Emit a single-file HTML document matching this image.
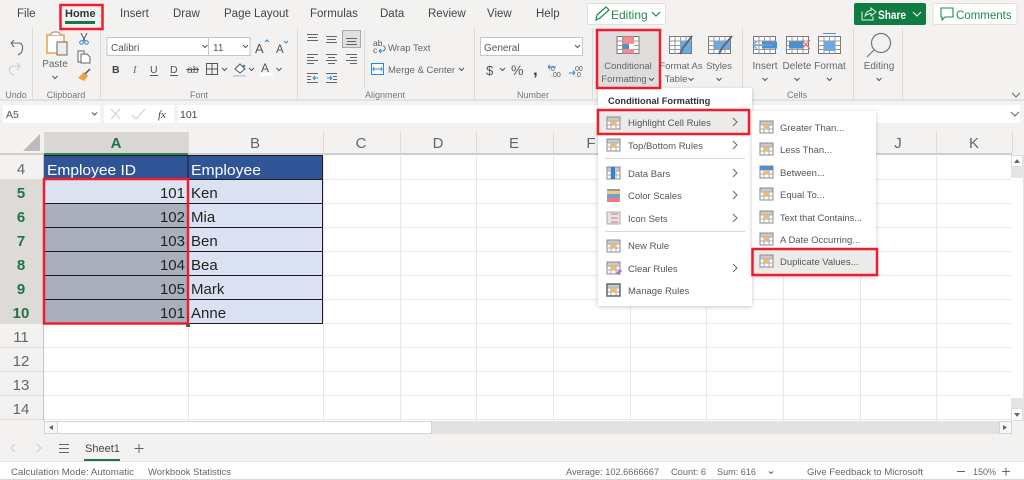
<!DOCTYPE html>
<html><head><meta charset="utf-8"><style>
html,body{margin:0;padding:0;width:1024px;height:480px;overflow:hidden;background:#fff}
svg{display:block;filter:blur(.35px)}
text{font-family:"Liberation Sans",sans-serif;font-size:10px;fill:#555}
.tab{font-size:11.5px;fill:#444}
.g{font-size:9px;fill:#777;text-anchor:middle}
.r{font-size:10px;fill:#666;text-anchor:middle}
.m{font-size:9.500px;fill:#555}
.h{font-size:15px;fill:#666;text-anchor:middle}
.rn{font-size:15px;fill:#666;text-anchor:middle}
.rs{font-size:15px;fill:#217346;font-weight:bold;text-anchor:middle}
.c{font-size:15px;fill:#222}
.n{font-size:15px;fill:#222;text-anchor:end}
.w{font-size:15px;fill:#fff}
.s{font-size:9.500px;fill:#666}
</style></head><body>
<svg width="1024" height="480" viewBox="0 0 1024 480" xmlns="http://www.w3.org/2000/svg">
<defs>
<filter id="sh" x="-10%" y="-10%" width="120%" height="120%"><feDropShadow dx="0" dy="1" stdDeviation="2" flood-color="#000" flood-opacity=".22"/></filter>
<g id="ic"><rect x="0" y="0" width="13" height="12" fill="#fff" stroke="#888"/><path d="M0 4H13M0 8H13M4 0V12M9 0V12" stroke="#aaa" fill="none"/><rect x="4" y="4" width="5" height="4" fill="#f2b968"/><rect x="0.5" y="0.5" width="12" height="3" fill="#c9c9c9"/></g>
<path id="ar" d="M0 0L4 4L0 8" fill="none" stroke="#666" stroke-width="1"/>
<path id="dn" d="M0 0L2.500 2.500L5 0" fill="none" stroke="#555" stroke-width="1"/>
<g id="sheet"><rect x="0" y="0" width="22" height="17" fill="#fff" stroke="#777"/><path d="M0 4.500H22M0 9H22M0 13H22M5.500 0V17M11 0V17M16.500 0V17" stroke="#999" fill="none"/></g>
</defs>

<rect width="1024" height="480" fill="#fff"/>
<!-- ribbon -->
<rect width="1024" height="100" fill="#f3f2f1"/>
<rect y="99" width="1024" height="2" fill="#e3e2e0"/>
<text class="tab" x="17" y="17">File</text>
<text class="tab" x="65" y="17" style="font-weight:bold;fill:#333;font-size:11px">Home</text>
<rect x="65" y="21" width="30" height="3" fill="#107c41"/>
<text class="tab" x="120" y="17">Insert</text>
<text class="tab" x="173" y="17">Draw</text>
<text class="tab" x="224" y="17">Page Layout</text>
<text class="tab" x="310" y="17">Formulas</text>
<text class="tab" x="380" y="17">Data</text>
<text class="tab" x="428" y="17">Review</text>
<text class="tab" x="487" y="17">View</text>
<text class="tab" x="536" y="17">Help</text>

<!-- Editing -->
<rect x="587.500" y="3.500" width="78" height="21" rx="2" fill="#fff" stroke="#e1dfdd"/>
<path d="M596 20L597 15L606 7L609 10L600 18Z" fill="none" stroke="#218a53" stroke-width="1.200"/>
<text x="611" y="19" style="font-size:12px;fill:#218a53">Editing</text>
<path d="M652 12L656 16L660 12" fill="none" stroke="#218a53" stroke-width="1.200"/>
<!-- Share -->
<rect x="854" y="3" width="72" height="22" rx="2" fill="#107c41"/>
<path d="M862 11.500V20H873V16.500M865 16C866 12 868 10.500 871 10.500V8L876 12L871 16V13.500C869 13.500 867 14.500 865 16Z" fill="none" stroke="#e8f3ec" stroke-width="1"/>
<text x="878" y="19" style="font-size:11.500px;fill:#fff;font-weight:bold" textLength="28" lengthAdjust="spacingAndGlyphs">Share</text>
<path d="M913 12L917 16L921 12" fill="none" stroke="#fff"/>
<!-- Comments -->
<rect x="933" y="3.500" width="84" height="21" rx="2" fill="#fff" stroke="#e1dfdd"/>
<path d="M941 8H953V17H945L942 20V17H941Z" fill="none" stroke="#218a53" stroke-width="1.100"/>
<text x="956" y="19" style="font-size:11.500px;fill:#218a53">Comments</text>

<!-- separators -->
<g stroke="#dcdad8"><path d="M32.500 28V99M100.500 28V99M297.500 28V99M364.500 30V88M474.500 28V99M592.500 28V99M742.500 28V99M853.500 28V99M902.500 28V99"/></g>

<!-- Undo -->
<path d="M11 43H19C24 43 24 53 18 55M11 43L14 40M11 43L14 47" fill="none" stroke="#666" stroke-width="1.100"/>
<path d="M20 66H13C8 66 8 74 14 75M20 66L17 63M20 66L17 70" fill="none" stroke="#ccc" stroke-width="1.100"/>
<text class="g" x="16" y="98">Undo</text>
<!-- Paste -->
<rect x="47" y="35" width="17" height="18" fill="#fff" stroke="#f0a040" stroke-width="1.500"/>
<path d="M50 35L53 32H58L61 35" fill="#fff" stroke="#888"/>
<rect x="57" y="42" width="10" height="13" fill="#eee" stroke="#666"/>
<text class="r" x="55" y="67">Paste</text>
<use href="#dn" x="52.500" y="76"/>
<path d="M81 33L85 41M87 33L83 41" stroke="#555" fill="none"/><circle cx="81.500" cy="42.500" r="1.800" fill="none" stroke="#2b88d8"/><circle cx="86.500" cy="42.500" r="1.800" fill="none" stroke="#2b88d8"/>
<path d="M78 51H84L84 62H78Z" fill="#fff" stroke="#666"/><path d="M81 54H87L90 57V63H81Z" fill="#fff" stroke="#666"/>
<path d="M78 78L84 72L88 76L84 81Z" fill="#f0a040"/><path d="M85 74L90 69" stroke="#555" stroke-width="1.500"/>
<text class="g" x="66" y="98">Clipboard</text>
<!-- Font -->
<rect x="107" y="37.500" width="143" height="18" fill="#fff" stroke="#c8c6c4"/>
<path d="M208.500 38V55" stroke="#c8c6c4"/>
<text x="111" y="51" style="font-size:10px;fill:#555">Calibri</text>
<text x="213" y="51" style="font-size:10px;fill:#555">11</text>
<use href="#dn" x="202.500" y="45"/><use href="#dn" x="243" y="45"/>
<text x="255" y="53" style="font-size:13px;fill:#555">A</text><path d="M265 42L267 40L269 42" stroke="#2b88d8" fill="none"/>
<text x="276" y="53" style="font-size:11.500px;fill:#555">A</text><path d="M284 41L286 43L288 41" stroke="#2b88d8" fill="none"/>
<text x="112" y="73" style="font-size:10.500px;font-weight:bold;fill:#444">B</text>
<text x="133" y="73" style="font-size:10.500px;font-style:italic;font-family:'Liberation Serif',serif;fill:#666">I</text>
<text x="150" y="73" style="font-size:10.500px;fill:#555">U</text><path d="M150 75.500H158" stroke="#555"/>
<text x="170" y="73" style="font-size:10.500px;fill:#555">D</text><path d="M170 75.500H178" stroke="#555" stroke-width="1"/>
<text x="187" y="73" style="font-size:10.500px;fill:#555">ab</text><path d="M186 69.500H199" stroke="#555"/>
<path d="M206.500 63.500H217.500V74.500H206.500ZM206.500 69H217.500M212 63.500V74.500" fill="none" stroke="#555"/>
<use href="#dn" x="222" y="68"/>
<path d="M235 69L240 64L245 69L240 73Z" fill="#fff" stroke="#555"/><circle cx="244" cy="66" r="1.300" fill="#2b88d8"/>
<rect x="233" y="75" width="13" height="2" fill="#c5d4ec"/>
<use href="#dn" x="249" y="68"/>
<text x="261" y="72" style="font-size:12px;fill:#555">A</text><rect x="260" y="73" width="13" height="3" fill="#fff"/>
<use href="#dn" x="276.500" y="68"/>
<text class="g" x="199" y="98">Font</text>
<!-- Alignment -->
<g stroke="#666" fill="none"><path d="M307 34.500H318M308 37.500H317M307 40.500H318"/><path d="M326 36.500H337M327 39.500H336M326 42.500H337"/>
<rect x="342.500" y="30.500" width="18" height="17" fill="#e1dfdd" stroke="#aaa"/><path d="M346 38.500H357M347 41.500H356M346 44.500H357"/>
<path d="M307 54.500H318M307 57.500H314M307 60.500H318M307 63.500H314"/><path d="M326 54.500H337M328 57.500H335M326 60.500H337M328 63.500H335"/><path d="M346 54.500H357M350 57.500H357M346 60.500H357M350 63.500H357"/>
<path d="M307 73.500H318M307 76.500H311M307 79.500H311M307 82.500H318"/><path d="M326 73.500H337M333 76.500H337M333 79.500H337M326 82.500H337"/></g>
<path d="M318 78H313M313 78L315 76M313 78L315 80" stroke="#2b88d8" fill="none"/><path d="M327 78H332M332 78L330 76M332 78L330 80" stroke="#2b88d8" fill="none"/>
<text x="373" y="46" style="font-size:8.500px;fill:#555">ab</text><text x="373" y="53" style="font-size:8.500px;fill:#555">c</text>
<path d="M383 46C386 46 386 51 382 51H379M379 51L381 49M379 51L381 53" stroke="#2b88d8" fill="none"/>
<text x="388" y="51" style="fill:#666;font-size:9.500px">Wrap Text</text>
<rect x="371.500" y="63.500" width="12" height="11" fill="#fff" stroke="#2b88d8"/><path d="M373 69H382M374 67L373 69L374 71M381 67L382 69L381 71" stroke="#2b88d8" fill="none"/>
<text x="388" y="73" style="fill:#666;font-size:9.500px">Merge &amp; Center</text>
<use href="#dn" x="459" y="68"/>
<text class="g" x="385" y="98">Alignment</text>
<!-- Number -->
<rect x="480.500" y="37.500" width="102" height="18" fill="#fff" stroke="#c8c6c4"/>
<text x="484" y="51" style="fill:#555">General</text><use href="#dn" x="575" y="45"/>
<text x="486" y="75" style="font-size:13px;fill:#555">$</text><use href="#dn" x="500" y="68"/>
<text x="511" y="75" style="font-size:14px;fill:#555">%</text>
<text x="533" y="75" style="font-size:17px;font-weight:bold;fill:#444">,</text>
<text x="549" y="71" style="font-size:7px;fill:#555">.0</text><text x="551" y="77" style="font-size:7px;fill:#555">.00</text><path d="M548 67H556M548 67L550 65M548 67L550 69" stroke="#2b88d8" fill="none"/>
<text x="573" y="71" style="font-size:7px;fill:#555">.00</text><text x="575" y="77" style="font-size:7px;fill:#555">.0</text><path d="M569 73H575M575 73L573 71M575 73L573 75" stroke="#2b88d8" fill="none"/>
<text class="g" x="533" y="98">Number</text>
<!-- CF -->
<rect x="597" y="29" width="63" height="60" fill="#dedddb"/>
<use href="#sheet" x="617" y="36.500"/>
<rect x="623" y="36.500" width="11" height="8" fill="#f58b8f"/><rect x="623" y="49" width="11" height="4.500" fill="#f58b8f"/><rect x="628" y="44" width="6" height="5" fill="#fff"/><rect x="623" y="44" width="6" height="5" fill="#4a8fd4"/>
<text class="r" x="628" y="69" style="font-size:9.500px">Conditional</text>
<text class="r" x="624" y="82" style="font-size:9.500px">Formatting</text>
<use href="#dn" x="649" y="78"/>
<!-- Format as table -->
<use href="#sheet" x="669.500" y="36.500"/><rect x="680" y="41" width="11" height="12" fill="#6aa9e4"/>
<path d="M692 36L683 48L680 54" stroke="#667" stroke-width="2" fill="none"/>
<text class="r" x="681" y="69" style="font-size:9.500px">Format As</text>
<text class="r" x="676" y="82" style="font-size:9.500px">Table</text><use href="#dn" x="688.500" y="78"/>
<!-- Styles -->
<use href="#sheet" x="708.500" y="36.500"/><rect x="714" y="41" width="16" height="8" fill="#6aa9e4"/>
<path d="M732 36L722 48L719 54" stroke="#667" stroke-width="2" fill="none"/>
<text class="r" x="719" y="69" style="font-size:9.500px">Styles</text><use href="#dn" x="716.500" y="78"/>
<!-- Cells -->
<use href="#sheet" x="753.500" y="36.500"/><rect x="762" y="41.500" width="15" height="7" fill="#4a8fd4"/><path d="M772 45H753M753 45L757 41M753 45L757 49" stroke="#6aa9e4" fill="none" stroke-width="1.300"/>
<text class="r" x="765" y="69">Insert</text><use href="#dn" x="762.500" y="78"/>
<use href="#sheet" x="786.500" y="36.500"/><rect x="789" y="41.500" width="14" height="7" fill="#4a8fd4"/><path d="M802 40L810 49M810 40L802 49" stroke="#f07070" stroke-width="1.200"/>
<text class="r" x="797" y="69">Delete</text><use href="#dn" x="794.500" y="78"/>
<use href="#sheet" x="818.500" y="36.500"/><rect x="824" y="41" width="11" height="10" fill="#6aa9e4"/><path d="M823 33.500H836" stroke="#4a8fd4"/>
<text class="r" x="830" y="69">Format</text><use href="#dn" x="827" y="78"/>
<text class="g" x="797" y="98">Cells</text>
<!-- Editing group -->
<circle cx="881" cy="43" r="9.500" fill="none" stroke="#777" stroke-width="1.200"/><path d="M874 50L867 57" stroke="#777" stroke-width="1.200"/>
<text class="r" x="879" y="69">Editing</text><use href="#dn" x="876.500" y="78"/>
<path d="M1012 93L1016 97L1020 93" stroke="#666" fill="none"/>

<!-- formula bar -->
<rect y="101" width="1024" height="31" fill="#f3f2f1"/>
<rect x="3" y="105" width="97" height="18" fill="#fff"/>
<rect x="104" y="105" width="70" height="18" fill="#fff"/>
<rect x="178" y="105" width="842" height="18" fill="#fff"/>
<text x="6" y="118" style="font-size:10.500px;fill:#555">A5</text>
<use href="#dn" x="92" y="112.500"/>
<path d="M111 109L120 119M120 109L111 119" stroke="#ccc"/><path d="M132 115L136 119L145 109" stroke="#ccc" fill="none"/>
<text x="158" y="118" style="font-size:11px;font-style:italic;font-family:'Liberation Serif',serif;fill:#444">fx</text>
<text x="180" y="118" style="font-size:10.500px;fill:#444">101</text>
<path d="M1011 112L1015 116L1019 112" stroke="#666" fill="none"/>

<!-- column headers -->
<rect y="132" width="1024" height="23" fill="#f3f2f1"/>
<rect y="153" width="1012" height="2" fill="#cfcecc"/>
<rect x="44" y="132" width="144" height="21" fill="#d9d8d5"/>
<rect x="44" y="153" width="144" height="2" fill="#2d8a57"/>
<path d="M23 151H40V134Z" fill="#bdbcba"/>
<text x="116" y="148" style="font-size:15px;font-weight:bold;fill:#217346;text-anchor:middle">A</text>
<text class="h" x="255" y="148">B</text><text class="h" x="361" y="148">C</text><text class="h" x="438" y="148">D</text><text class="h" x="514" y="148">E</text><text class="h" x="591" y="148">F</text><text class="h" x="668" y="148">G</text><text class="h" x="745" y="148">H</text><text class="h" x="822" y="148">I</text><text class="h" x="898" y="148">J</text><text class="h" x="974" y="148">K</text>
<g stroke="#dcdbd9"><path d="M188.500 132V153M323.500 132V153M400.500 132V153M476.500 132V153M553.500 132V153M630.500 132V153M706.500 132V153M783.500 132V153M860.500 132V153M936.500 132V153M1012.500 132V153"/></g>

<!-- row headers -->
<rect y="155" width="44" height="266" fill="#f3f2f1"/>
<rect y="180" width="44" height="144" fill="#dcdbd8"/>
<g stroke="#dcdbd9"><path d="M0 179.500H44M0 203.500H44M0 227.500H44M0 251.500H44M0 275.500H44M0 299.500H44M0 323.500H44M0 347.500H44M0 371.500H44M0 395.500H44M0 419.500H44"/></g>
<rect x="43" y="155" width="1" height="266" fill="#c6c5c3"/>
<text class="rn" x="21" y="174">4</text>
<text class="rs" x="21" y="198">5</text><text class="rs" x="21" y="222">6</text><text class="rs" x="21" y="246">7</text><text class="rs" x="21" y="270">8</text><text class="rs" x="21" y="294">9</text><text class="rs" x="21" y="318">10</text>
<text class="rn" x="21" y="342">11</text><text class="rn" x="21" y="366">12</text><text class="rn" x="21" y="390">13</text><text class="rn" x="21" y="414">14</text>

<!-- grid -->
<g stroke="#e9e8e6"><path d="M323.500 156V421M400.500 156V421M476.500 156V421M553.500 156V421M630.500 156V421M706.500 156V421M783.500 156V421M860.500 156V421M936.500 156V421M188.500 324V421M44 347.500H1011M44 371.500H1011M44 395.500H1011M44 419.500H1011M323 179.500H1011M323 203.500H1011M323 227.500H1011M323 251.500H1011M323 275.500H1011M323 299.500H1011M323 323.500H1011"/></g>

<!-- table -->
<rect x="44" y="156" width="279" height="24" fill="#2f5597"/>
<rect x="188" y="180" width="135" height="144" fill="#d9e1f2"/>
<rect x="44" y="180" width="144" height="24" fill="#dce3f3"/>
<rect x="44" y="204" width="144" height="120" fill="#a9afbd"/>
<g stroke="#1c1c1c" stroke-width="1"><path d="M44 155.500H323M44 179.500H323M44 203.500H323M44 227.500H323M44 251.500H323M44 275.500H323M44 299.500H323M44 323.500H323M188 156V324M322.500 156V324"/></g>
<text class="w" x="47" y="175" textLength="89" lengthAdjust="spacingAndGlyphs">Employee ID</text>
<text class="w" x="191" y="175" textLength="70" lengthAdjust="spacingAndGlyphs">Employee</text>
<text class="n" x="185" y="198">101</text><text class="n" x="185" y="222">102</text><text class="n" x="185" y="246">103</text><text class="n" x="185" y="270">104</text><text class="n" x="185" y="294">105</text><text class="n" x="185" y="318">101</text>
<text class="c" x="191" y="198">Ken</text><text class="c" x="191" y="222">Mia</text><text class="c" x="191" y="246">Ben</text><text class="c" x="191" y="270">Bea</text><text class="c" x="191" y="294">Mark</text><text class="c" x="191" y="318">Anne</text>
<rect x="186" y="323" width="4" height="4" fill="#217346"/>

<!-- scrollbars -->
<rect x="1011" y="155" width="13" height="266" fill="#e6e5e3"/>
<rect x="1011" y="178" width="12" height="220" fill="#fff"/>
<rect x="1011.500" y="155.500" width="11" height="11" fill="#fff" stroke="#ddd"/><path d="M1014 163H1020L1017 159Z" fill="#666"/>
<rect x="1011.500" y="408.500" width="11" height="12" fill="#fff" stroke="#ddd"/><path d="M1014 413H1020L1017 417Z" fill="#666"/>
<rect y="421" width="1024" height="40" fill="#f3f2f1"/>
<rect x="44" y="421" width="968" height="13" fill="#e3e2e0"/>
<rect x="44.500" y="421.500" width="387" height="12" fill="#fff" stroke="#d5d4d2"/>
<path d="M44.500 421.500H57.500V433.500H44.500Z" fill="#f6f6f6" stroke="#d5d4d2"/><path d="M53 425V430L49 427.500Z" fill="#666"/>
<rect x="999.500" y="421.500" width="12" height="12" fill="#f6f6f6" stroke="#d5d4d2"/><path d="M1003 425V430L1007 427.500Z" fill="#666"/>

<!-- sheet tabs -->
<path d="M15 444L11 448L15 452" stroke="#ccc" fill="none"/><path d="M37 444L41 448L37 452" stroke="#ccc" fill="none"/>
<path d="M59 444.500H69M59 448.500H69M59 452.500H69" stroke="#666"/>
<text x="85" y="452" style="font-size:11px;fill:#444">Sheet1</text>
<rect x="84" y="459" width="36" height="2" fill="#217346"/>
<path d="M139 444V453M134.500 448.500H143.500" stroke="#666"/>

<!-- status -->
<rect y="461" width="1024" height="18" fill="#fff"/>
<rect y="461" width="1024" height="1" fill="#e6e5e3"/><rect y="479" width="1024" height="1" fill="#d8d7d5"/>
<text class="s" x="11" y="475" textLength="123" lengthAdjust="spacingAndGlyphs">Calculation Mode: Automatic</text>
<text class="s" x="148" y="475" textLength="83" lengthAdjust="spacingAndGlyphs">Workbook Statistics</text>
<text class="s" x="566" y="475" textLength="93" lengthAdjust="spacingAndGlyphs">Average: 102.6666667</text>
<text class="s" x="671" y="475" textLength="35" lengthAdjust="spacingAndGlyphs">Count: 6</text>
<text class="s" x="717" y="475" textLength="39" lengthAdjust="spacingAndGlyphs">Sum: 616</text>
<path d="M769 471.500L771 473.500L773 471.500" stroke="#666" fill="none"/>
<text class="s" x="807" y="475" textLength="116" lengthAdjust="spacingAndGlyphs">Give Feedback to Microsoft</text>
<path d="M957 471.500H965M1002 471.500H1010M1006 467.500V475.500" stroke="#666"/>
<text class="s" x="973" y="475" textLength="23" lengthAdjust="spacingAndGlyphs">150%</text>

<!-- menu 1 -->
<rect x="598" y="88" width="154" height="218" fill="#fff" filter="url(#sh)"/>
<text x="608" y="104" style="font-size:9.300px;font-weight:bold;fill:#333">Conditional Formatting</text>
<rect x="598" y="110" width="151" height="23" fill="#edebe9"/>
<use href="#ic" x="607" y="117"/><text class="m" x="628" y="126">Highlight Cell Rules</text><use href="#ar" x="733" y="118"/>
<use href="#ic" x="607" y="139"/><text class="m" x="628" y="149">Top/Bottom Rules</text><use href="#ar" x="733" y="141"/>
<path d="M605 158.500H745" stroke="#d8d7d5"/>
<use href="#ic" x="607" y="167"/><rect x="611" y="167" width="4" height="12" fill="#2b88d8"/><text class="m" x="628" y="177">Data Bars</text><use href="#ar" x="733" y="169"/>
<rect x="607" y="190" width="13" height="4" fill="#f2cf68"/><rect x="607" y="194" width="13" height="4" fill="#6f9fd8"/><rect x="607" y="198" width="13" height="4" fill="#ef7c80"/><rect x="607" y="189" width="13" height="2" fill="#999"/><text class="m" x="628" y="199">Color Scales</text><use href="#ar" x="733" y="191"/>
<rect x="607" y="212" width="13" height="12" fill="#e6e6e6" stroke="#aaa"/><path d="M611 214H618M611 218H618M611 222H618" stroke="#e07070"/><text class="m" x="628" y="222">Icon Sets</text><use href="#ar" x="733" y="214"/>
<path d="M605 231.500H745" stroke="#d8d7d5"/>
<use href="#ic" x="607" y="240"/><text class="m" x="628" y="249">New Rule</text>
<use href="#ic" x="607" y="262"/><path d="M616 273L620 269L622 271L618 275Z" fill="#b36fd0"/><text class="m" x="628" y="272">Clear Rules</text><use href="#ar" x="733" y="264"/>
<use href="#ic" x="607" y="284"/><rect x="607" y="284" width="13" height="12" fill="none" stroke="#666" stroke-width="1.500"/><text class="m" x="628" y="294">Manage Rules</text>

<!-- submenu -->
<rect x="752" y="111" width="124" height="165" fill="#fff" filter="url(#sh)"/>
<rect x="753" y="250" width="123" height="24" fill="#edebe9"/>
<use href="#ic" x="760" y="121"/><text class="m" x="780" y="131">Greater Than...</text>
<use href="#ic" x="760" y="143"/><text class="m" x="780" y="153">Less Than...</text>
<use href="#ic" x="760" y="166"/><rect x="760" y="166" width="13" height="4" fill="#4a8fd4"/><text class="m" x="780" y="176">Between...</text>
<use href="#ic" x="760" y="188"/><text class="m" x="780" y="198">Equal To...</text>
<use href="#ic" x="760" y="211"/><text class="m" x="780" y="221" textLength="82" lengthAdjust="spacingAndGlyphs">Text that Contains...</text>
<use href="#ic" x="760" y="233"/><text class="m" x="780" y="243">A Date Occurring...</text>
<use href="#ic" x="760" y="255"/><text class="m" x="780" y="265">Duplicate Values...</text>

<!-- red boxes -->
<g fill="none" stroke="#ed1c2e" stroke-width="2.500">
<rect x="60.500" y="5" width="42" height="24"/>
<rect x="597" y="30" width="63" height="58"/>
<rect x="598" y="110" width="151" height="24"/>
<rect x="752.500" y="249" width="124.500" height="26"/>
<rect x="44" y="179" width="144" height="144.500"/>
</g>
</svg>
</body></html>
